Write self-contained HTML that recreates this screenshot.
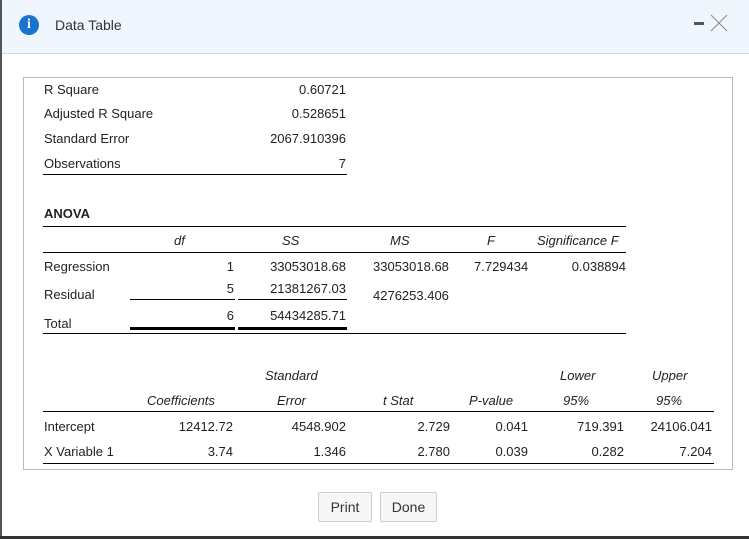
<!DOCTYPE html>
<html><head><meta charset="utf-8"><style>
*{margin:0;padding:0;box-sizing:border-box}
body{width:749px;height:539px;background:#fff;position:relative;overflow:hidden;font-family:"Liberation Sans",Arial,sans-serif;font-size:13px;color:#222}
.a{position:absolute;white-space:nowrap;line-height:14px}
.r{text-align:right}
.i{font-style:italic}
.ln{position:absolute;height:1px;background:#000}
.tk{position:absolute;height:3px;background:#000}
</style></head><body>
<div style="position:absolute;left:0;top:0;width:749px;height:54px;background:#f0f6fd;border-bottom:1px solid #c5e0f5"></div>
<div style="position:absolute;left:0;top:0;width:2px;height:539px;background:#555"></div>
<div style="position:absolute;left:0;top:536px;width:749px;height:3px;background:#333"></div>
<div style="position:absolute;left:19px;top:15px;width:20px;height:20px;border-radius:50%;background:#1a73d0;color:#fff;font:bold 14px 'Liberation Serif',serif;text-align:center;line-height:20px">i</div>
<div class="a" style="left:55px;top:17px;font-size:14px;line-height:16px;color:#333">Data Table</div>
<div style="position:absolute;left:694px;top:22px;width:10px;height:3px;background:#555"></div>
<svg style="position:absolute;left:710px;top:14px" width="18" height="18"><path d="M1 1L17 17M17 1L1 17" stroke="#888" stroke-width="1"/></svg>
<div style="position:absolute;left:23px;top:77px;width:710px;height:393px;border:1px solid #bbb"></div>

<div class="a" style="left:44px;top:83px">R Square</div><div class="a r" style="left:246px;width:100px;top:83px">0.60721</div>
<div class="a" style="left:44px;top:107px">Adjusted R Square</div><div class="a r" style="left:246px;width:100px;top:107px">0.528651</div>
<div class="a" style="left:44px;top:132px">Standard Error</div><div class="a r" style="left:246px;width:100px;top:132px">2067.910396</div>
<div class="a" style="left:44px;top:157px">Observations</div><div class="a r" style="left:246px;width:100px;top:157px">7</div>
<div class="ln" style="left:43px;top:174px;width:304px"></div>

<div class="a" style="left:44px;top:207px;font-weight:bold">ANOVA</div>
<div class="ln" style="left:43px;top:226px;width:583px"></div>
<div class="a i" style="left:174px;top:234px">df</div>
<div class="a i" style="left:282px;top:234px">SS</div>
<div class="a i" style="left:390px;top:234px">MS</div>
<div class="a i" style="left:487px;top:234px">F</div>
<div class="a i" style="left:537px;top:234px">Significance F</div>
<div class="ln" style="left:43px;top:252px;width:583px"></div>
<div class="a" style="left:44px;top:260px">Regression</div>
<div class="a r" style="left:134px;width:100px;top:260px">1</div>
<div class="a r" style="left:246px;width:100px;top:260px">33053018.68</div>
<div class="a" style="left:373px;top:260px">33053018.68</div>
<div class="a" style="left:474px;top:260px">7.729434</div>
<div class="a r" style="left:526px;width:100px;top:260px">0.038894</div>
<div class="a" style="left:44px;top:288px">Residual</div>
<div class="a r" style="left:134px;width:100px;top:282px">5</div>
<div class="a r" style="left:246px;width:100px;top:282px">21381267.03</div>
<div class="a" style="left:373px;top:289px">4276253.406</div>
<div class="ln" style="left:130px;top:299px;width:105px"></div>
<div class="ln" style="left:238px;top:299px;width:109px"></div>
<div class="a" style="left:44px;top:317px">Total</div>
<div class="a r" style="left:134px;width:100px;top:309px">6</div>
<div class="a r" style="left:246px;width:100px;top:309px">54434285.71</div>
<div class="tk" style="left:130px;top:327px;width:105px"></div>
<div class="tk" style="left:238px;top:327px;width:109px"></div>
<div class="ln" style="left:43px;top:333px;width:583px"></div>

<div class="a i" style="left:265px;top:369px">Standard</div>
<div class="a i" style="left:560px;top:369px">Lower</div>
<div class="a i" style="left:652px;top:369px">Upper</div>
<div class="a i" style="left:147px;top:394px">Coefficients</div>
<div class="a i" style="left:277px;top:394px">Error</div>
<div class="a i" style="left:383px;top:394px">t Stat</div>
<div class="a i" style="left:469px;top:394px">P-value</div>
<div class="a i" style="left:563px;top:394px">95%</div>
<div class="a i" style="left:656px;top:394px">95%</div>
<div class="ln" style="left:43px;top:411px;width:671px"></div>
<div class="a" style="left:44px;top:420px">Intercept</div>
<div class="a r" style="left:133px;width:100px;top:420px">12412.72</div>
<div class="a r" style="left:246px;width:100px;top:420px">4548.902</div>
<div class="a r" style="left:350px;width:100px;top:420px">2.729</div>
<div class="a r" style="left:428px;width:100px;top:420px">0.041</div>
<div class="a r" style="left:524px;width:100px;top:420px">719.391</div>
<div class="a r" style="left:612px;width:100px;top:420px">24106.041</div>
<div class="a" style="left:44px;top:445px">X Variable 1</div>
<div class="a r" style="left:133px;width:100px;top:445px">3.74</div>
<div class="a r" style="left:246px;width:100px;top:445px">1.346</div>
<div class="a r" style="left:350px;width:100px;top:445px">2.780</div>
<div class="a r" style="left:428px;width:100px;top:445px">0.039</div>
<div class="a r" style="left:524px;width:100px;top:445px">0.282</div>
<div class="a r" style="left:612px;width:100px;top:445px">7.204</div>
<div class="ln" style="left:43px;top:463px;width:671px"></div>

<div style="position:absolute;left:318px;top:492px;width:54px;height:30px;border:1px solid #ccc;border-radius:2px;background:#f7f7f7;text-align:center;line-height:28px;font-size:14px;color:#333">Print</div>
<div style="position:absolute;left:380px;top:492px;width:57px;height:30px;border:1px solid #ccc;border-radius:2px;background:#f7f7f7;text-align:center;line-height:28px;font-size:14px;color:#333">Done</div>
</body></html>
